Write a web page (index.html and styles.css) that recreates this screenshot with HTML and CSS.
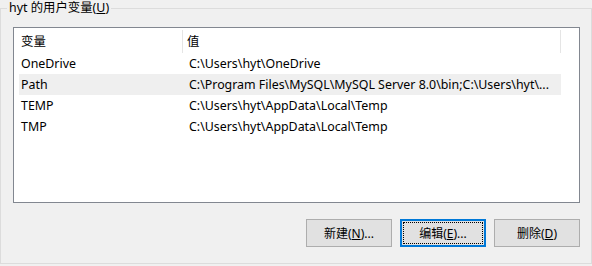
FILE: index.html
```html
<!DOCTYPE html>
<html lang="zh-CN">
<head>
  <meta charset="UTF-8" />
  <title>hyt 的用户变量</title>
  <link rel="stylesheet" href="styles.css">
</head>
<body>
  <div class="group">
    <div class="group-title">hyt 的用户变量(<u>U</u>)</div>

    <div class="listbox">
      <div class="list-head">
        <div class="col col-name">变量</div>
        <div class="col col-value">值</div>
      </div>
      <div class="list-row">
        <div class="col col-name">OneDrive</div>
        <div class="col col-value">C:\Users\hyt\OneDrive</div>
      </div>
      <div class="list-row hover">
        <div class="col col-name">Path</div>
        <div class="col col-value">C:\Program Files\MySQL\MySQL Server 8.0\bin;C:\Users\hyt\...</div>
      </div>
      <div class="list-row">
        <div class="col col-name">TEMP</div>
        <div class="col col-value">C:\Users\hyt\AppData\Local\Temp</div>
      </div>
      <div class="list-row">
        <div class="col col-name">TMP</div>
        <div class="col col-value">C:\Users\hyt\AppData\Local\Temp</div>
      </div>
    </div>

    <div class="buttons">
      <button>新建(<u>N</u>)...</button>
      <button class="focused">编辑(<u>E</u>)...</button>
      <button>删除(<u>D</u>)</button>
    </div>
  </div>
</body>
</html>
```
FILE: styles.css
```css
body {
  margin: 0;
  background: #f0f0f0;
  font-family: "Noto Sans", "Noto Sans CJK SC", sans-serif;
  font-size: 12.4px;
  color: #000;
}
.group {
  position: relative;
  margin-top: 8px;
  width: 592px;
  height: 256px;
  border: 1px solid #dcdcdc;
  padding: 18px 11px 0 12px;
  box-sizing: border-box;
}
.group-title {
  position: absolute;
  top: -10px;
  left: 6px;
  padding: 0 2px;
  line-height: 18px;
  background: #f0f0f0;
}
.listbox {
  height: 176px;
  border: 1px solid #828790;
  background: #fff;
  box-sizing: border-box;
}
.list-head,
.list-row {
  display: flex;
  margin-left: 5px;
  width: 542px;
}
.list-head {
  height: 25px;
  align-items: center;
}
.list-head .col {
  height: 23px;
  line-height: 23px;
  margin-top: 2px;
  border-right: 1px solid #e5e5e5;
}
.list-row {
  height: 21px;
  line-height: 21px;
}
.list-row.hover {
  background: #efefef;
}
.col {
  white-space: nowrap;
  overflow: hidden;
  box-sizing: border-box;
}
.col-name {
  width: 164px;
  padding-left: 2px;
}
.col-value {
  width: 378px;
}
.list-head .col-value {
  padding-left: 4px;
}
.list-row .col-value {
  padding-left: 6px;
}
.buttons {
  display: flex;
  justify-content: flex-end;
  gap: 8px;
  margin-top: 16px;
}
button {
  width: 86px;
  height: 28px;
  padding: 0;
  font-family: inherit;
  font-size: 12px;
  color: #000;
  background: #e1e1e1;
  border: 1px solid #adadad;
}
button.focused {
  border: 2px solid #0078d7;
  outline: 1px dotted #000;
  outline-offset: -4px;
}
```
